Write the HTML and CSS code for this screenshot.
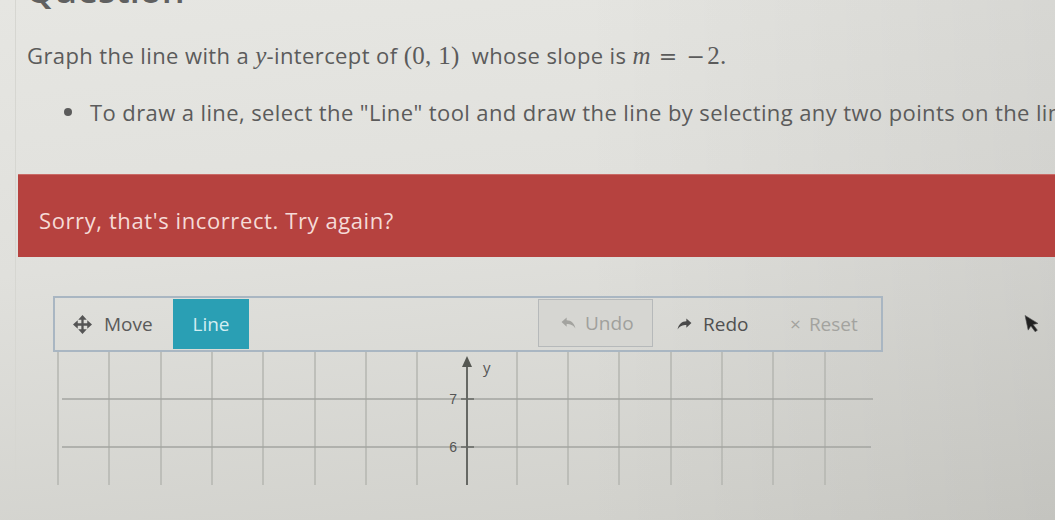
FILE: index.html
```html
<!DOCTYPE html>
<html>
<head>
<meta charset="utf-8">
<link rel="stylesheet" href="styles.css">
</head>
<body>
<div class="panel">
  <div class="title">Question</div>
  <p class="prompt">Graph the line with a <span class="mi">y</span>-intercept of <span class="mn pt">(0, 1)</span> whose slope is <span class="mi">m</span><span class="mo">=</span><span class="mn"><span class="op">−</span>2.</span></p>
  <div class="bullet-row"><span class="dot"></span><span class="bullet-text">To draw a line, select the "Line" tool and draw the line by selecting any two points on the line.</span></div>
  <div class="banner">Sorry, that's incorrect. Try again?</div>
  <div class="graph">
    <div class="toolbar">
      <div class="tool tool-move">
        <svg class="ico-move" viewBox="0 0 20 20" width="19" height="19">
          <path d="M10 3 V17 M3 10 H17" stroke="#555" stroke-width="2.4" fill="none"/>
          <path d="M10 0 L14.5 5 H5.5 Z M10 20 L14.5 15 H5.5 Z M0 10 L5 5.5 V14.5 Z M20 10 L15 5.5 V14.5 Z" fill="#555"/>
        </svg>
        <span>Move</span>
      </div>
      <div class="tool tool-line">Line</div>
      <div class="tool tool-undo">
        <svg class="ico" viewBox="0 0 16 13" width="15" height="12"><path d="M6 0.5 L0.5 5.5 L6 10.5 V7.5 C10 7.5 13 8.5 15.5 12.5 C14.5 7 11 3.5 6 3.5 Z" fill="#a3a39f"/></svg>
        <span>Undo</span>
      </div>
      <div class="tool tool-redo">
        <svg class="ico" viewBox="0 0 16 13" width="15" height="12"><path d="M10 0.5 L15.5 5.5 L10 10.5 V7.5 C6 7.5 3 8.5 0.5 12.5 C1.5 7 5 3.5 10 3.5 Z" fill="#4a4a4a"/></svg>
        <span>Redo</span>
      </div>
      <div class="tool tool-reset"><span class="x">×</span><span>Reset</span></div>
    </div>
    <svg class="grid" viewBox="0 0 830 135" width="830" height="135">
      <g stroke="#b4b6b1" stroke-width="1.5">
        <line x1="5" y1="0" x2="5" y2="133"/>
        <line x1="56" y1="0" x2="56" y2="133"/>
        <line x1="108" y1="0" x2="108" y2="133"/>
        <line x1="159" y1="0" x2="159" y2="133"/>
        <line x1="210" y1="0" x2="210" y2="133"/>
        <line x1="262" y1="0" x2="262" y2="133"/>
        <line x1="313" y1="0" x2="313" y2="133"/>
        <line x1="364" y1="0" x2="364" y2="133"/>
        <line x1="464" y1="0" x2="464" y2="133"/>
        <line x1="515" y1="0" x2="515" y2="133"/>
        <line x1="566" y1="0" x2="566" y2="133"/>
        <line x1="618" y1="0" x2="618" y2="133"/>
        <line x1="669" y1="0" x2="669" y2="133"/>
        <line x1="720" y1="0" x2="720" y2="133"/>
        <line x1="772" y1="0" x2="772" y2="133"/>
      </g>
      <g stroke="#a3a5a0" stroke-width="1.6">
        <line x1="9" y1="47" x2="820" y2="47"/>
        <line x1="9" y1="95" x2="818" y2="95"/>
      </g>
      <line x1="414" y1="14" x2="414" y2="133" stroke="#666864" stroke-width="2"/>
      <path d="M414 4 L419 15 H409 Z" fill="#555752"/>
      <line x1="408" y1="47" x2="421" y2="47" stroke="#666864" stroke-width="1.5"/>
      <line x1="408" y1="95" x2="421" y2="95" stroke="#666864" stroke-width="1.5"/>
      <text x="430" y="21" class="axis-label">y</text>
      <text x="404" y="52" class="tick-label" text-anchor="end">7</text>
      <text x="404" y="100" class="tick-label" text-anchor="end">6</text>
    </svg>
  </div>
</div>
<svg class="cursor" viewBox="0 0 14 22" width="14" height="22"><path d="M1 1 L1 16 L4.5 12.5 L7.5 19 L10 18 L7 11.5 L12 11.5 Z" fill="#222" stroke="#555" stroke-width="0.6"/></svg>
</body>
</html>
```
FILE: styles.css
```css
html, body {
  margin: 0;
  padding: 0;
  height: 100%;
  overflow: hidden;
}
body {
  position: relative;
  font-family: "Open Sans", "Noto Sans", sans-serif;
  color: #5b5b5b;
  background:
    linear-gradient(to right, rgba(0,0,0,0) 55%, rgba(0,0,0,0.06) 100%),
    linear-gradient(175deg, #e6e6e2 0%, #e0e0dc 45%, #d0d0cb 100%);
}
.panel {
  margin-left: 15px;
  border-left: 1px solid #d6d6d1;
  min-height: 100%;
}
.title {
  margin-top: -30px;
  padding-left: 10px;
  font-size: 36px;
  line-height: 40px;
  font-weight: 600;
  color: #606060;
  white-space: nowrap;
}
.prompt {
  margin: 31px 0 0;
  padding-left: 11px;
  font-size: 22px;
  line-height: 28px;
  letter-spacing: 0.4px;
  white-space: nowrap;
}
.mi {
  font-family: "Liberation Serif", "DejaVu Serif", serif;
  font-style: italic;
  font-size: 25px;
  letter-spacing: 0;
}
.mn {
  font-family: "Liberation Serif", "DejaVu Serif", serif;
  font-size: 25px;
  letter-spacing: 0.3px;
}
.pt {
  margin-right: 6px;
}
.mo {
  font-family: "DejaVu Serif", "Liberation Serif", serif;
  font-size: 22px;
  margin: 0 9px 0 8px;
}
.op {
  font-family: "DejaVu Serif", "Liberation Serif", serif;
  font-size: 22px;
  margin-right: 2px;
}
.bullet-row {
  margin-top: 27px;
  padding-left: 48px;
  display: flex;
  align-items: center;
  gap: 18px;
  height: 28px;
  white-space: nowrap;
}
.dot {
  flex: none;
  width: 8px;
  height: 8px;
  border-radius: 50%;
  background: #5b5b5b;
}
.bullet-text {
  font-size: 22px;
  line-height: 28px;
  letter-spacing: 0.4px;
}
.banner {
  margin: 48px 0 0 2px;
  height: 83px;
  box-sizing: border-box;
  padding: 31px 0 0 21px;
  background: #b6423f;
  border-top: 1px solid #c96a66;
  color: #f5dbd7;
  font-size: 22px;
  line-height: 28px;
  letter-spacing: 0.6px;
}
.graph {
  margin: 39px 0 0 37px;
  width: 830px;
}
.toolbar {
  display: flex;
  align-items: stretch;
  height: 56px;
  box-sizing: border-box;
  padding: 1px 0;
  border: 2px solid #a9b6c2;
  font-size: 19px;
}
.tool {
  display: flex;
  align-items: center;
  box-sizing: border-box;
}
.tool-move {
  width: 118px;
  padding-left: 18px;
  gap: 12px;
  color: #5a5a5a;
}
.tool-line {
  width: 76px;
  justify-content: center;
  background: #2a9fb4;
  color: #d3eef2;
}
.tool-undo {
  margin-left: auto;
  width: 115px;
  padding-left: 22px;
  gap: 9px;
  background: #d6d6d2;
  border: 1px solid #b6b9ba;
  color: #a0a09c;
  margin-top: 0;
  margin-bottom: 2px;
}
.tool-redo {
  width: 123px;
  padding-left: 24px;
  gap: 11px;
  color: #505050;
}
.tool-reset {
  width: 105px;
  padding-left: 14px;
  gap: 8px;
  color: #a3a39f;
}
.x {
  font-size: 19px;
}
.grid {
  display: block;
}
.axis-label {
  font-family: "Open Sans", sans-serif;
  font-size: 15px;
  fill: #555;
}
.tick-label {
  font-family: "Liberation Sans", sans-serif;
  font-size: 14px;
  fill: #555;
}
.cursor {
  position: absolute;
  left: 1026px;
  top: 313px;
  transform: rotate(-12deg);
}
```
